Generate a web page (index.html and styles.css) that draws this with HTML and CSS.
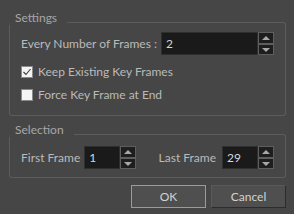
FILE: index.html
```html
<!DOCTYPE html>
<html lang="en">
<head>
    <meta charset="UTF-8">
    <meta name="viewport" content="width=device-width, initial-scale=1.0">
    <title>Key Frames</title>
    <link rel="stylesheet" href="styles.css">
</head>
<body>
    <div class="dialog">
        <div class="group">
            <div class="group-head">
                <span class="group-title">Settings</span>
                <span class="group-line"></span>
            </div>
            <div class="group-body settings-body">
                <div class="row">
                    <span class="field-label">Every Number of Frames :</span>
                    <div class="spin spin-wide">
                        <span class="spin-value">2</span>
                        <span class="spin-buttons">
                            <span class="spin-up"><i class="arrow-up"></i></span>
                            <span class="spin-down"><i class="arrow-down"></i></span>
                        </span>
                    </div>
                </div>
                <label class="check-row first-check">
                    <span class="checkbox">
                        <svg width="10" height="10" viewBox="0 0 10 10"><polyline points="1.5,5 4,7.5 8.5,2" fill="none" stroke="#3a3a3a" stroke-width="1.1"/></svg>
                    </span>
                    Keep Existing Key Frames
                </label>
                <label class="check-row">
                    <span class="checkbox"></span>
                    Force Key Frame at End
                </label>
            </div>
        </div>

        <div class="group selection">
            <div class="group-head">
                <span class="group-title">Selection</span>
                <span class="group-line"></span>
            </div>
            <div class="group-body selection-body">
                <div class="row">
                    <span class="field-label">First Frame</span>
                    <div class="spin spin-small">
                        <span class="spin-value">1</span>
                        <span class="spin-buttons">
                            <span class="spin-up"><i class="arrow-up"></i></span>
                            <span class="spin-down"><i class="arrow-down"></i></span>
                        </span>
                    </div>
                    <span class="field-label last-label">Last Frame</span>
                    <div class="spin spin-small">
                        <span class="spin-value">29</span>
                        <span class="spin-buttons">
                            <span class="spin-up"><i class="arrow-up"></i></span>
                            <span class="spin-down"><i class="arrow-down"></i></span>
                        </span>
                    </div>
                </div>
            </div>
        </div>

        <div class="button-group">
            <button class="btn btn-default">OK</button>
            <button class="btn">Cancel</button>
        </div>
    </div>
</body>
</html>
```

FILE: styles.css
```css
body {
    margin: 0;
    background-color: #464646;
    font-family: Lato, "Liberation Sans", sans-serif;
    font-size: 12px;
    line-height: 15px;
    color: #bababa;
}

.dialog {
    padding: 10px 8px 0 9px;
    width: 277px;
}

/* group boxes */
.group-head {
    display: flex;
    height: 15px;
}

.group-title {
    padding: 0 10px 0 6px;
    color: #a6a6a6;
}

.group-line {
    flex: 1;
    align-self: flex-end;
    height: 2px;
    border-top: 1px solid #5c5c5c;
    border-right: 1px solid #5c5c5c;
    border-top-right-radius: 3px;
}

.group-body {
    border: 1px solid #5c5c5c;
    border-top: none;
    border-radius: 0 0 3px 3px;
}

.settings-body {
    padding: 7px 11px 9px 11px;
}

.selection {
    margin-top: 6px;
}

.selection-body {
    padding: 9px 11px 8px 11px;
}

.row {
    display: flex;
    align-items: center;
    height: 23px;
}

.field-label {
    white-space: nowrap;
}

.last-label {
    margin-left: auto;
    margin-right: 6px;
}

/* spin boxes */
.spin {
    display: flex;
    flex-shrink: 0;
    height: 23px;
    box-sizing: border-box;
}

.spin-wide {
    margin-left: auto;
    width: 113px;
}

.spin-small {
    width: 52px;
    margin-left: 4px;
}

.last-label + .spin-small {
    margin-left: 0;
}

.spin-value {
    flex: 1;
    background-color: #1a1a1a;
    border: 1px solid #2f2f2f;
    padding-left: 4px;
    line-height: 21px;
    color: #d4d8dc;
}

.spin-buttons {
    display: flex;
    flex-direction: column;
    width: 16px;
    box-sizing: border-box;
    border: 1px solid #5e5e5e;
    background-color: #5e5e5e;
}

.spin-up,
.spin-down {
    display: flex;
    align-items: center;
    justify-content: center;
    background-color: #1e1e1e;
}

.spin-up {
    height: 10px;
    margin-bottom: 2px;
}

.spin-down {
    flex: 1;
}

.arrow-up {
    border-left: 4px solid transparent;
    border-right: 4px solid transparent;
    border-bottom: 4px solid #a8a8a8;
}

.arrow-down {
    border-left: 4px solid transparent;
    border-right: 4px solid transparent;
    border-top: 4px solid #a8a8a8;
}

/* check boxes */
.check-row {
    display: flex;
    align-items: center;
    height: 23px;
}

.first-check {
    margin-top: 5px;
}

.checkbox {
    display: flex;
    align-items: center;
    justify-content: center;
    width: 12px;
    height: 12px;
    box-sizing: border-box;
    border: 1px solid #8a8a8a;
    background-color: #f4f4f4;
    margin-right: 5px;
}

/* buttons */
.button-group {
    display: flex;
    justify-content: flex-end;
    gap: 5px;
    margin-top: 7px;
}

.btn {
    width: 75px;
    height: 23px;
    padding: 0;
    font-family: inherit;
    font-size: 12px;
    color: #d2d2d2;
    background-color: #4f4f4f;
    border: 1px solid #5a5a5a;
    border-right-color: #2c2c2c;
    border-bottom-color: #2c2c2c;
}

.btn-default {
    border: 1px solid #2ec6dc;
}
```
